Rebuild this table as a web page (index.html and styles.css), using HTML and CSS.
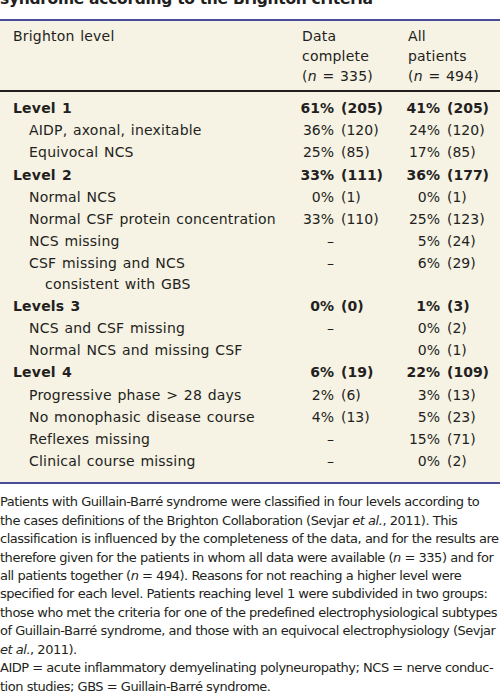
FILE: index.html
```html
<!DOCTYPE html>
<html lang="en">
<head>
  <meta charset="UTF-8" />
  <meta name="viewport" content="width=device-width, initial-scale=1.0"/>
  <title>Brighton criteria</title>
  <link rel="stylesheet" href="styles.css">
</head>
<body>

  <h2 class="titulo">syndrome according to the Brighton criteria</h2>

  <table class="tabla">
    <thead>
      <tr>
        <th class="col-nivel">Brighton level</th>
        <th class="col-dato">Data<br>complete<br>(<i>n</i> = 335)</th>
        <th class="col-dato">All<br>patients<br>(<i>n</i> = 494)</th>
      </tr>
    </thead>
    <tbody>
      <tr class="nivel">
        <td>Level 1</td>
        <td><span class="pct">61%</span><span class="num">(205)</span></td>
        <td><span class="pct">41%</span><span class="num">(205)</span></td>
      </tr>
      <tr>
        <td class="sub">AIDP, axonal, inexitable</td>
        <td><span class="pct">36%</span><span class="num">(120)</span></td>
        <td><span class="pct">24%</span><span class="num">(120)</span></td>
      </tr>
      <tr>
        <td class="sub">Equivocal NCS</td>
        <td><span class="pct">25%</span><span class="num">(85)</span></td>
        <td><span class="pct">17%</span><span class="num">(85)</span></td>
      </tr>
      <tr class="nivel">
        <td>Level 2</td>
        <td><span class="pct">33%</span><span class="num">(111)</span></td>
        <td><span class="pct">36%</span><span class="num">(177)</span></td>
      </tr>
      <tr>
        <td class="sub">Normal NCS</td>
        <td><span class="pct">0%</span><span class="num">(1)</span></td>
        <td><span class="pct">0%</span><span class="num">(1)</span></td>
      </tr>
      <tr>
        <td class="sub">Normal CSF protein concentration</td>
        <td><span class="pct">33%</span><span class="num">(110)</span></td>
        <td><span class="pct">25%</span><span class="num">(123)</span></td>
      </tr>
      <tr>
        <td class="sub">NCS missing</td>
        <td><span class="pct">–</span></td>
        <td><span class="pct">5%</span><span class="num">(24)</span></td>
      </tr>
      <tr>
        <td class="sub">CSF missing and NCS<br><span class="cont">consistent with GBS</span></td>
        <td><span class="pct">–</span></td>
        <td><span class="pct">6%</span><span class="num">(29)</span></td>
      </tr>
      <tr class="nivel">
        <td>Levels 3</td>
        <td><span class="pct">0%</span><span class="num">(0)</span></td>
        <td><span class="pct">1%</span><span class="num">(3)</span></td>
      </tr>
      <tr>
        <td class="sub">NCS and CSF missing</td>
        <td><span class="pct">–</span></td>
        <td><span class="pct">0%</span><span class="num">(2)</span></td>
      </tr>
      <tr>
        <td class="sub">Normal NCS and missing CSF</td>
        <td></td>
        <td><span class="pct">0%</span><span class="num">(1)</span></td>
      </tr>
      <tr class="nivel">
        <td>Level 4</td>
        <td><span class="pct">6%</span><span class="num">(19)</span></td>
        <td><span class="pct">22%</span><span class="num">(109)</span></td>
      </tr>
      <tr>
        <td class="sub">Progressive phase &gt; 28 days</td>
        <td><span class="pct">2%</span><span class="num">(6)</span></td>
        <td><span class="pct">3%</span><span class="num">(13)</span></td>
      </tr>
      <tr>
        <td class="sub">No monophasic disease course</td>
        <td><span class="pct">4%</span><span class="num">(13)</span></td>
        <td><span class="pct">5%</span><span class="num">(23)</span></td>
      </tr>
      <tr>
        <td class="sub">Reflexes missing</td>
        <td><span class="pct">–</span></td>
        <td><span class="pct">15%</span><span class="num">(71)</span></td>
      </tr>
      <tr class="ultima">
        <td class="sub">Clinical course missing</td>
        <td><span class="pct">–</span></td>
        <td><span class="pct">0%</span><span class="num">(2)</span></td>
      </tr>
    </tbody>
  </table>

  <p class="nota">
    Patients with Guillain-Barré syndrome were classified in four levels according to<br>
    the cases definitions of the Brighton Collaboration (Sevjar <i>et al.</i>, 2011). This<br>
    classification is influenced by the completeness of the data, and for the results are<br>
    therefore given for the patients in whom all data were available (<i>n</i> = 335) and for<br>
    all patients together (<i>n</i> = 494). Reasons for not reaching a higher level were<br>
    specified for each level. Patients reaching level 1 were subdivided in two groups:<br>
    those who met the criteria for one of the predefined electrophysiological subtypes<br>
    of Guillain-Barré syndrome, and those with an equivocal electrophysiology (Sevjar<br>
    <i>et al.</i>, 2011).<br>
    AIDP = acute inflammatory demyelinating polyneuropathy; NCS = nerve conduc-<br>
    tion studies; GBS = Guillain-Barré syndrome.
  </p>

</body>
</html>
```

FILE: styles.css
```css
* {
  box-sizing: border-box;
  margin: 0;
  padding: 0;
}
body {
  font-family: 'DejaVu Sans', 'Liberation Sans', sans-serif;
  background: #fff;
  color: #231f20;
  overflow: hidden;
}

.titulo {
  font-size: 15.5px;
  font-weight: 700;
  letter-spacing: -0.3px;
  line-height: 20px;
  height: 20px;
  margin-top: -11.5px;
  margin-bottom: 10.5px;
  white-space: nowrap;
}

/* Tabla */
.tabla {
  width: 100%;
  border-collapse: collapse;
  table-layout: fixed;
  background: #f6f2e4;
  border-top: 2px solid #4a4c9a;
  border-bottom: 2px solid #4a4c9a;
  font-size: 14px;
  letter-spacing: 0.2px;
  word-spacing: 1px;
}

.tabla th {
  font-weight: 400;
  text-align: left;
  vertical-align: top;
  line-height: 20px;
  padding: 5px 0 4px 8px;
  border-bottom: 2px solid #231f20;
}
.tabla th.col-nivel {
  width: 294px;
  padding-left: 13px;
}
.tabla th.col-dato {
  width: 106px;
}

.tabla td {
  vertical-align: top;
  line-height: 20.2px;
  padding: 1px 0;
  white-space: nowrap;
}
.tabla td:first-child {
  padding-left: 13px;
}
.tabla tbody tr:first-child td {
  padding-top: 6px;
}
.tabla tr.ultima td {
  padding-bottom: 11px;
}

.tabla td.sub {
  padding-left: 29px;
}
.tabla .cont {
  padding-left: 16px;
}

.nivel td {
  font-weight: 700;
}

.pct {
  display: inline-block;
  width: 40px;
  text-align: right;
  letter-spacing: 0;
  word-spacing: 0;
}
.num {
  margin-left: 7px;
  letter-spacing: 0;
}

/* Nota al pie */
.nota {
  font-size: 13px;
  letter-spacing: -0.48px;
  line-height: 18.4px;
  padding-top: 9px;
  white-space: nowrap;
}
```
